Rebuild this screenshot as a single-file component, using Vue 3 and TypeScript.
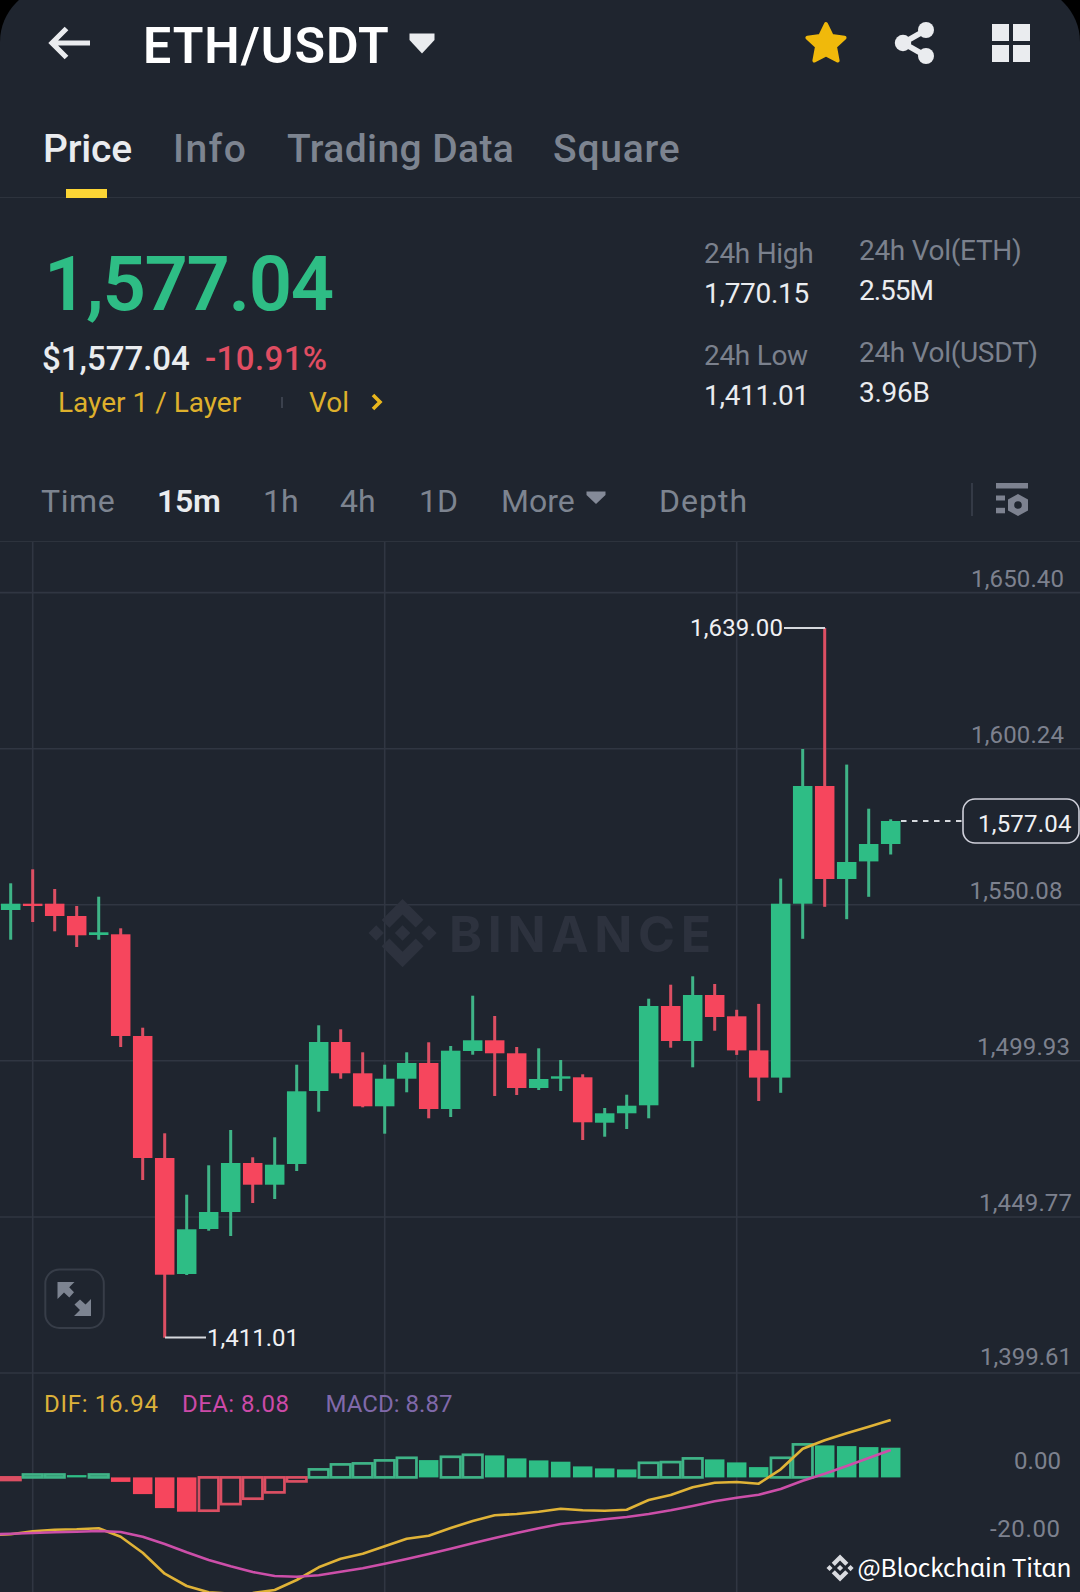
<script setup lang="ts">
interface Candle {
  x: number
  up: boolean
  high: number
  low: number
  top: number
  bottom: number
}

interface Bar {
  x: number
  y: number
  h: number
  up: boolean
  hollow: boolean
}

const STEP = 22
const FIRST = 10.7
const centre = (i: number): number => FIRST + STEP * i

// direction, wick top, wick bottom, body top, body bottom
const rawCandles: [string, number, number, number, number][] = [
  ['g', 883.3, 939.7, 903.7, 910], ['r', 869.3, 922, 903.7, 906], ['r', 889, 931.3, 903.7, 916],
  ['r', 906, 947, 916, 935.3], ['g', 896.7, 939.7, 932.3, 935], ['r', 928.3, 1047, 934.3, 1036],
  ['r', 1027.7, 1180, 1036, 1158], ['r', 1133.3, 1337.7, 1158, 1274.7], ['g', 1194.7, 1275, 1229.3, 1274],
  ['g', 1165.3, 1230.7, 1212, 1229], ['g', 1130, 1236, 1163, 1212], ['r', 1157.3, 1203, 1163, 1184.7],
  ['g', 1137.3, 1199, 1164.7, 1184.7], ['g', 1064.7, 1171, 1091.3, 1164], ['g', 1025.3, 1111.7, 1042, 1091],
  ['r', 1029.3, 1078.7, 1042, 1073.3], ['r', 1052.3, 1107.3, 1073.3, 1106.3], ['g', 1064.7, 1133.7, 1078.7, 1106.3],
  ['g', 1052.3, 1092.3, 1063, 1078.7], ['r', 1042.3, 1118.3, 1063, 1109], ['g', 1046, 1117, 1050.7, 1109],
  ['g', 995.7, 1054.7, 1040.3, 1051], ['r', 1016, 1096, 1040.3, 1053.3], ['r', 1047, 1095, 1053.3, 1088],
  ['g', 1048.3, 1090, 1079, 1088], ['g', 1060, 1091, 1076.3, 1078.7], ['r', 1074.3, 1140, 1077.3, 1122.3],
  ['g', 1108, 1136.7, 1113.3, 1122.7], ['g', 1094.7, 1129, 1105.7, 1113.3], ['g', 998.7, 1118.3, 1006, 1105.3],
  ['r', 984.7, 1047.7, 1006, 1041], ['g', 976.3, 1067.3, 995, 1041], ['r', 984, 1030.7, 995, 1017],
  ['r', 1009.8, 1054.9, 1016.3, 1050.4], ['r', 1003.9, 1101, 1050.4, 1077.6], ['g', 878.6, 1092.8, 903.7, 1077.6],
  ['g', 749, 938.8, 786, 903.7], ['r', 627.9, 906.8, 786, 879], ['g', 764.6, 919.2, 862, 879],
  ['g', 808.7, 896.8, 844, 861.4], ['g', 819.3, 854.5, 821, 844],
]

const candles: Candle[] = rawCandles.map(([d, high, low, top, bottom], i) => ({
  x: centre(i), up: d === 'g', high, low, top, bottom,
}))

// histogram: upper case = filled, lower case = hollow; the number is the size in px
const rawBars: [string, number][] = [
  ['r', 2.6], ['g', 2.9], ['g', 2.9], ['G', 2.3], ['g', 2.9], ['R', 4.5], ['R', 16.7], ['R', 30.7], ['R', 34.3],
  ['r', 33.3], ['r', 26.7], ['r', 21.3], ['r', 15], ['r', 4], ['g', 8], ['g', 13], ['g', 14], ['g', 17], ['g', 19.6],
  ['G', 17.3], ['g', 20.6], ['g', 22.6], ['G', 22], ['G', 19], ['G', 17], ['G', 15.7], ['G', 11], ['G', 9], ['G', 8],
  ['g', 14.6], ['g', 15.3], ['g', 19], ['G', 18], ['G', 15], ['G', 10.3], ['g', 19.6], ['g', 33], ['G', 32],
  ['G', 31.3], ['G', 30.3], ['G', 29.7],
]
const ZERO = 1477.4

const bars: Bar[] = rawBars.map(([k, h], i) => {
  const up = k.toLowerCase() === 'g'
  return { x: centre(i) - 9.75, y: up ? ZERO - h : ZERO, h, up, hollow: k === k.toLowerCase() }
})

const difY = [
  523, 514, 509, 508, 505, 530, 578, 641, 678, 697, 701, 699, 690, 660, 622, 596, 581, 559, 536, 527, 504, 483, 466,
  462, 455, 446, 451, 452, 449, 420, 405, 382, 368, 366, 371, 328, 266, 241, 220, 200, 180,
]
const deaY = [
  521, 519, 517, 515, 513, 516, 530, 552, 577, 600, 619, 636, 648, 650, 646, 635, 625, 611, 597, 582, 566, 550, 534,
  519, 505, 492, 485, 478, 471, 462, 451, 438, 424, 413, 404, 387, 362, 341, 318, 294, 270,
]
const toPoints = (v: number[]): string =>
  ['-4,' + (1360 + v[0] / 3 + 0.6)].concat(v.map((y, i) => `${centre(i)},${(1360 + y / 3).toFixed(1)}`)).join(' ')
const difLine = toPoints(difY)
const deaLine = toPoints(deaY)

const rows = [592.6, 748.7, 904.7, 1060.7, 1217, 1373]
const cols = [32.7, 384.7, 736.7]

const axis = [
  { t: '1,650.40', x: 971, y: 587, w: 93 },
  { t: '1,600.24', x: 971, y: 743, w: 93 },
  { t: '1,550.08', x: 969.5, y: 899, w: 93 },
  { t: '1,499.93', x: 977, y: 1055, w: 93 },
  { t: '1,449.77', x: 979, y: 1211, w: 93 },
  { t: '1,399.61', x: 980, y: 1365, w: 92 },
  { t: '0.00', x: 1014, y: 1469, w: 47 },
  { t: '-20.00', x: 990, y: 1537, w: 70 },
]

const tabs = ['Price', 'Info', 'Trading Data', 'Square']
const logo =
  'M16.624 13.9202l2.7175 2.7154-7.353 7.353-7.353-7.352 2.7175-2.7164 4.6355 4.6595 4.6356-4.6595zm4.6366-4.6366L24 12l-2.7154 2.7164L18.5682 12l2.6924-2.7164zm-9.272.001l2.7163 2.6914-2.7164 2.7174v-.001L9.2721 12l2.7164-2.7154zm-9.2722-.001L5.4088 12l-2.6914 2.6924L0 12l2.7164-2.7164zM11.9885.0115l7.353 7.329-2.7174 2.7154-4.6356-4.6356-4.6355 4.6595-2.7174-2.7154 7.353-7.353z'
</script>

<template>
  <div class="device">
    <main class="screen">
      <header class="header">
        <svg class="back" width="44" height="40" viewBox="0 0 44 40">
          <path d="M42 20H4M18.500 5.500L4 20L18.500 34.500" fill="none" stroke="#eaecef" stroke-width="5.200" />
        </svg>
        <h1 class="pair">ETH/USDT</h1>
        <svg class="caret" width="26" height="22" viewBox="0 0 26 22">
          <path d="M0.500 0.500H25.500V7L13 20.500L0.500 7Z" fill="#eaecef" />
        </svg>
        <svg class="star" width="42" height="44" viewBox="0 0 42 44">
          <path
            d="M21 3L26.800 15L39.500 16.700L30 25.500L32.600 39.500L21 33.500L9.400 39.500L12 25.500L2.500 16.700L15.200 15Z"
            fill="#f0b90b" stroke="#f0b90b" stroke-width="4" stroke-linejoin="round"
          />
        </svg>
        <svg class="share" width="42" height="44" viewBox="0 0 42 44">
          <path d="M32 9L9 22L32 35" fill="none" stroke="#eaecef" stroke-width="5.500" />
          <circle cx="32" cy="9" r="8" fill="#eaecef" />
          <circle cx="9" cy="22" r="8.200" fill="#eaecef" />
          <circle cx="32" cy="35" r="8" fill="#eaecef" />
        </svg>
        <svg class="apps" width="38" height="38" viewBox="0 0 38 38" fill="#eaecef">
          <rect x="0" y="0" width="17" height="17" />
          <rect x="21" y="0" width="17" height="17" />
          <rect x="0" y="21" width="17" height="17" />
          <rect x="21" y="21" width="17" height="17" />
        </svg>
      </header>

      <nav class="tabs">
        <span v-for="(tab, i) in tabs" :key="tab" class="tab" :class="['tab-' + i, { active: i === 0 }]">{{ tab }}</span>
      </nav>

      <section class="summary">
        <div class="quote">
          <div class="last">1,577.04</div>
          <div class="fiat"><span class="usd">$1,577.04</span><span class="change">-10.91%</span></div>
          <div class="tags">
            <span class="tag-layer">Layer 1 / Layer</span>
            <i class="tag-sep"></i>
            <span class="tag-vol">Vol</span>
            <svg class="tag-arrow" width="12" height="18" viewBox="0 0 12 18">
              <path d="M2 2L9 9L2 16" fill="none" stroke="#e9b61c" stroke-width="3.600" />
            </svg>
          </div>
        </div>
        <dl class="stats">
          <dt>24h High</dt>
          <dd>1,770.15</dd>
          <dt>24h Low</dt>
          <dd>1,411.01</dd>
        </dl>
        <dl class="stats stats-right">
          <dt>24h Vol(ETH)</dt>
          <dd class="tight">2.55M</dd>
          <dt>24h Vol(USDT)</dt>
          <dd>3.96B</dd>
        </dl>
      </section>

      <nav class="intervals">
        <span class="i-time">Time</span>
        <span class="selected">15m</span>
        <span>1h</span>
        <span class="i-4h">4h</span>
        <span>1D</span>
        <span class="i-more">More
          <svg width="20" height="14" viewBox="0 0 20 14"><path d="M0.500 0.500H19.500V4L10 13L0.500 4Z" fill="#848a98" /></svg>
        </span>
        <span class="i-depth">Depth</span>
        <i class="rule"></i>
        <svg class="settings" width="32" height="34" viewBox="0 0 32 34" fill="#7d8290">
          <rect x="0" y="0" width="32" height="5.500" />
          <rect x="0" y="12.500" width="9" height="5" />
          <rect x="0" y="24.800" width="9" height="5.500" />
          <path fill-rule="evenodd" d="M22 11L32 16.500V27.500L22 33L12 27.500V16.500ZM22 18.200A3.800 3.800 0 1 0 22 25.800A3.800 3.800 0 1 0 22 18.200Z" />
        </svg>
      </nav>

      <svg class="chart" width="1080" height="1050" viewBox="0 542 1080 1050">
        <g stroke="#303642" stroke-width="1.600">
          <line v-for="y in rows" :key="'r' + y" x1="0" x2="1080" :y1="y" :y2="y" />
          <line v-for="x in cols" :key="'c' + x" :x1="x" :x2="x" y1="542" y2="1592" />
        </g>

        <g fill="#2d323e">
          <path :d="logo" transform="translate(368.500 899) scale(2.840)" />
          <text class="brand" x="449" y="951.500" textLength="262">BINANCE</text>
        </g>

        <g v-for="c in candles" :key="c.x" :class="c.up ? 'up' : 'down'">
          <rect class="wick" :x="c.x - 1.5" :y="c.high" width="3" :height="c.low - c.high" />
          <rect :x="c.x - 9.75" :y="c.top" width="19.500" :height="c.bottom - c.top" />
        </g>

        <g v-for="b in bars" :key="b.x" :class="[b.up ? 'up' : 'down', { hollow: b.hollow }]">
          <rect :x="b.x" :y="b.y" width="19.500" :height="b.h" />
        </g>
        <polyline :points="difLine" fill="none" stroke="#e0b337" stroke-width="2.600" stroke-linejoin="round" />
        <polyline :points="deaLine" fill="none" stroke="#cc4fa9" stroke-width="2.600" stroke-linejoin="round" />

        <g class="axis">
          <text v-for="a in axis" :key="a.t" :x="a.x" :y="a.y" :textLength="a.w">{{ a.t }}</text>
        </g>

        <g class="marker">
          <path d="M784 628H825M165 1337.500H206" stroke="#d5d8dd" stroke-width="1.800" />
          <text x="690" y="636" textLength="93">1,639.00</text>
          <text x="207" y="1346" textLength="92">1,411.01</text>
          <path d="M901 821H963" stroke="#d5d8dd" stroke-width="1.800" stroke-dasharray="5.500 5.500" />
          <rect x="963" y="799" width="116" height="44" rx="12" fill="#1f252f" stroke="#cfd0da" stroke-width="1.600" />
          <text x="978" y="832" textLength="93.500">1,577.04</text>
        </g>

        <g class="indicators">
          <text x="44" y="1412" textLength="114" fill="#dcb13a">DIF: 16.94</text>
          <text x="182" y="1412" textLength="107" fill="#cc4aa8">DEA: 8.08</text>
          <text x="325.500" y="1412" textLength="127" fill="#8069aa">MACD: 8.87</text>
        </g>

        <rect x="45.300" y="1269.500" width="58.500" height="58.500" rx="14" fill="#1f252f" stroke="#373d48" stroke-width="2" />
        <g fill="#7d8491">
          <path d="M57.500 1282H74.500L69.200 1287.300L74 1292.300L69.300 1297.500L64 1292.500L57.500 1299Z" />
          <path d="M91 1316V1299L85.500 1304.500L80 1299.500L74.500 1304.500L80 1310L74 1316Z" />
        </g>

        <g fill="#d9dbe0">
          <path :d="logo" transform="translate(826.500 1554.500) scale(1.130)" />
        </g>
        <text class="credit" x="857.500" y="1577" textLength="214">@Blockchɑin Titɑn</text>
      </svg>
    </main>
  </div>
</template>

<style>
body {
  background: #000;
}
</style>

<style scoped>
.device {
  width: 1080px;
  height: 1592px;
  overflow: hidden;
  background: #000;
  font-family: Roboto, "Liberation Sans", sans-serif;
  color: #eaecef;
}
.screen {
  margin-top: -14px;
  padding-top: 14px;
  height: 1592px;
  box-sizing: content-box;
  background: #1f252f;
  border-radius: 56px 56px 0 0;
  overflow: hidden;
}
.header {
  display: flex;
  align-items: center;
  height: 90px;
  box-sizing: border-box;
  padding-left: 48px;
}
.back {
  margin-top: -4px;
}
.pair {
  margin: 2px 0 0 51px;
  width: 265px;
  font-size: 50px;
  font-weight: 600;
  line-height: 60px;
  letter-spacing: 0.95px;
  color: #fff;
}
.caret {
  margin: -3px 0 0 1px;
}
.star {
  margin: -5px 0 0 370px;
}
.share {
  margin: -5px 0 0 47px;
}
.apps {
  margin: -5px 0 0 56px;
}
.tabs {
  display: grid;
  grid-template-columns: 130px 114px 266px auto;
  height: 108px;
  box-sizing: border-box;
  padding: 39px 0 0 43px;
  border-bottom: 1.5px solid #2d333d;
  font-size: 39px;
  font-weight: 500;
  line-height: 40px;
  letter-spacing: 0.4px;
  white-space: nowrap;
  color: #7d8490;
}
.tab-1 {
  letter-spacing: 1.4px;
}
.tab-3 {
  letter-spacing: 0.8px;
}
.tab.active {
  letter-spacing: -0.2px;
  color: #eaecef;
}
.tab.active::after {
  content: "";
  display: block;
  width: 41px;
  height: 9px;
  margin: 20px 0 0 23px;
  background: #fcd535;
}
.summary {
  display: flex;
  height: 263px;
}
.quote {
  width: 662px;
  padding: 48px 0 0 42px;
}
.last {
  margin-left: 2px;
  font-size: 76px;
  font-weight: 600;
  line-height: 76px;
  letter-spacing: -1.4px;
  color: #2ebd85;
}
.fiat {
  display: flex;
  margin-top: 19px;
  font-size: 33px;
  font-weight: 500;
  line-height: 36px;
}
.usd {
  width: 163px;
}
.change {
  letter-spacing: 0.4px;
  color: #e04d62;
}
.tags {
  display: flex;
  align-items: center;
  margin: 10px 0 0 16px;
  font-size: 28px;
  line-height: 32px;
  color: #deb02c;
}
.tag-layer {
  width: 223px;
}
.tag-sep {
  width: 2px;
  height: 11px;
  margin-top: -2px;
  background: #3b414d;
}
.tag-vol {
  width: 62px;
  margin-left: 26px;
}
.tag-arrow {
  margin-top: -3px;
}
.stats {
  width: 155px;
  margin: 40px 0 0;
  font-size: 28px;
  line-height: 32px;
  letter-spacing: -0.3px;
  white-space: nowrap;
}
.stats-right {
  width: 200px;
  margin-top: 37px;
}
.stats dt {
  color: #7b818d;
}
.stats dd {
  margin: 8px 0 30px;
}
.stats .tight {
  letter-spacing: -1px;
}
.intervals {
  display: grid;
  grid-template-columns: 116px 106px 76px 80px 82px 158px 312px 25px auto;
  align-items: center;
  height: 81px;
  box-sizing: border-box;
  padding-left: 41px;
  border-bottom: 1.5px solid #2d333d;
  font-size: 32px;
  line-height: 36px;
  white-space: nowrap;
  color: #7d8490;
}
.intervals .selected {
  font-weight: 600;
  letter-spacing: -0.3px;
  color: #eaecef;
}
.i-time {
  letter-spacing: 0.6px;
}
.i-4h {
  padding-left: 1px;
}
.i-depth {
  letter-spacing: 1px;
}
.i-more svg {
  margin-left: 3px;
  vertical-align: 7px;
}
.rule {
  width: 2px;
  height: 33px;
  margin-top: -3px;
  background: #343a46;
}
.settings {
  margin-top: -3px;
}
.chart {
  display: block;
}
.chart text {
  font-size: 24px;
}
.up {
  fill: #2ebd85;
  stroke: #3fb487;
}
.down {
  fill: #f6465d;
  stroke: #dc4f63;
}
.up rect,
.down rect {
  stroke-width: 0;
}
.up .wick {
  fill: #3fb487;
}
.down .wick {
  fill: #dc4f63;
}
.hollow rect {
  fill: none;
  stroke-width: 2.7;
}
.axis {
  fill: #7d818e;
}
.marker text {
  fill: #f0f1f4;
}
.chart .brand {
  font-family: Inter, sans-serif;
  font-size: 50px;
  font-weight: 700;
}
.chart .credit {
  font-family: "Noto Sans CJK SC", sans-serif;
  font-size: 24.500px;
  font-weight: 400;
  fill: #fff;
}
</style>
